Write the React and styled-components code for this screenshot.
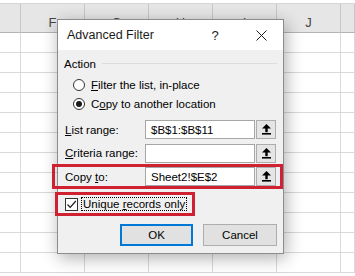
import React from "react";
import styled, { createGlobalStyle } from "styled-components";

const GlobalStyle = createGlobalStyle`
  html, body {
    margin: 0;
    padding: 0;
    background: #ffffff;
    overflow: hidden;
  }
  body {
    font-family: "Liberation Sans", Arial, sans-serif;
  }
`;

const Page = styled.div`
  position: relative;
  width: 355px;
  height: 276px;
  overflow: hidden;
  background: #ffffff;
`;

const TopStrip = styled.div`
  height: 3px;
  background: #ffffff;
  border-bottom: 1px solid #d6d6d6;
`;

const SheetRow = styled.div`
  display: grid;
  grid-template-columns: 21px repeat(5, 64px) 1fr;
  height: ${(p) => (p.header ? "29px" : "20px")};
  background: ${(p) => (p.header ? "#e6e6e6" : "#ffffff")};
`;

const Cell = styled.div`
  box-sizing: border-box;
  border-right: 1px solid ${(p) => (p.header ? "#c6c6c6" : "#d9d9d9")};
  border-bottom: 1px solid ${(p) => (p.header ? "#b4b4b4" : "#d9d9d9")};
  display: flex;
  align-items: flex-end;
  justify-content: center;
  padding-bottom: 2px;
  font-family: "Liberation Sans", Arial, sans-serif;
  font-size: 13px;
  line-height: 15px;
  color: #444444;
`;

const Dialog = styled.div`
  position: absolute;
  left: 57px;
  top: 19px;
  width: 227px;
  height: 235px;
  box-sizing: border-box;
  border: 1px solid #8c8c8c;
  background: #f0f0f0;
  box-shadow: 2px 4px 16px rgba(0, 0, 0, 0.32);
  display: flex;
  flex-direction: column;
  font-family: "Liberation Sans", Arial, sans-serif;
  font-size: 11.5px;
  color: #000000;
`;

const TitleBar = styled.div`
  height: 30px;
  background: #ffffff;
  display: flex;
  align-items: center;
`;

const Title = styled.div`
  flex: 1;
  padding-left: 9px;
  font-size: 12.5px;
  color: #1a1a1a;
`;

const TitleButton = styled.div`
  width: ${(p) => p.w}px;
  height: 30px;
  display: flex;
  align-items: center;
  justify-content: center;
  font-size: 13px;
  color: #1a1a1a;
`;

const Body = styled.div`
  display: flex;
  flex-direction: column;
`;

const GroupHeader = styled.div`
  margin-top: 4px;
  height: 20px;
  display: flex;
  align-items: center;
  padding-left: 6px;
  padding-right: 6px;
  gap: 6px;
  &::after {
    content: "";
    flex: 1;
    height: 1px;
    background: #dcdcdc;
    margin-top: -1px;
  }
`;

const RadioList = styled.div`
  margin-top: 1px;
  display: flex;
  flex-direction: column;
`;

const RadioRow = styled.label`
  height: 19px;
  display: flex;
  align-items: center;
  padding-left: 15px;
  gap: 6px;
`;

const RadioCircle = styled.span`
  width: 12px;
  height: 12px;
  box-sizing: border-box;
  border-radius: 50%;
  border: 1px solid #333333;
  background: #ffffff;
  display: flex;
  align-items: center;
  justify-content: center;
  &::after {
    content: "";
    width: 6px;
    height: 6px;
    border-radius: 50%;
    background: ${(p) => (p.checked ? "#1a1a1a" : "transparent")};
  }
`;

const Key = styled.span`
  text-decoration: underline;
  text-underline-offset: 1px;
`;

const Form = styled.div`
  margin-top: 7px;
  display: flex;
  flex-direction: column;
  gap: 4.5px;
`;

const FieldRow = styled.div`
  position: relative;
  height: 19px;
  display: flex;
  align-items: center;
  padding-left: 7px;
  ${(p) =>
    p.highlight &&
    `
    &::after {
      content: "";
      position: absolute;
      left: -6px;
      right: 0;
      top: -3px;
      bottom: -3px;
      border: 3px solid #cf2131;
      pointer-events: none;
    }
  `}
`;

const FieldLabel = styled.div`
  width: 80px;
`;

const Input = styled.div`
  width: 110px;
  height: 19px;
  box-sizing: border-box;
  border: 1px solid #a6a6a6;
  background: #ffffff;
  display: flex;
  align-items: center;
  padding-left: 5px;
  font-size: 11.5px;
`;

const PickButton = styled.div`
  margin-left: 1px;
  width: 20px;
  height: 19px;
  box-sizing: border-box;
  border: 1px solid #adadad;
  background: #e5e5e5;
  display: flex;
  align-items: center;
  justify-content: center;
`;

const CheckRow = styled.div`
  margin-top: 6px;
  margin-left: -3px;
  width: 140px;
  height: 24px;
  box-sizing: border-box;
  border: 3px solid #cf2131;
  display: flex;
  align-items: center;
  padding-left: 7px;
  gap: 3px;
`;

const CheckBox = styled.span`
  width: 13px;
  height: 13px;
  box-sizing: border-box;
  border: 1px solid #333333;
  background: #ffffff;
  display: flex;
  align-items: center;
  justify-content: center;
`;

const FocusLabel = styled.span`
  border: 1px dotted #000000;
  padding: 0 1px;
  line-height: 12px;
`;

const ButtonRow = styled.div`
  margin-top: 8px;
  display: flex;
  justify-content: flex-end;
  gap: 10px;
  padding-right: 6px;
`;

const Button = styled.div`
  width: ${(p) => (p.primary ? "73px" : "74px")};
  height: 22px;
  box-sizing: border-box;
  border: ${(p) => (p.primary ? "2px solid #0078d7" : "1px solid #adadad")};
  background: #e1e1e1;
  display: flex;
  align-items: center;
  justify-content: center;
  font-size: 11.5px;
`;

const UpArrow = () => (
  <svg width="9" height="11" viewBox="0 0 9 11">
    <polygon points="4.5,0 0,4.5 9,4.5" fill="#000" />
    <rect x="3.3" y="4" width="2.4" height="4.2" fill="#000" />
    <rect x="0" y="9" width="9" height="1.6" fill="#000" />
  </svg>
);

const CloseIcon = () => (
  <svg width="11" height="11" viewBox="0 0 11 11">
    <path d="M0.5 0.5 L10.5 10.5 M10.5 0.5 L0.5 10.5" stroke="#1a1a1a" strokeWidth="1" />
  </svg>
);

const CheckMark = () => (
  <svg width="11" height="11" viewBox="0 0 11 11">
    <path d="M1.5 5.5 L4.2 8.3 L9.8 2" stroke="#1a1a1a" strokeWidth="1.2" fill="none" />
  </svg>
);

const columns = ["E", "F", "G", "H", "I", "J", ""];

const App = () => {
  const rows = Array.from({ length: 12 });

  return (
    <Page>
      <GlobalStyle />
      <TopStrip />
      <SheetRow header>
        {columns.map((c, i) => (
          <Cell header key={i}>
            {i === 0 ? "" : c}
          </Cell>
        ))}
      </SheetRow>
      {rows.map((_, r) => (
        <SheetRow key={r}>
          {columns.map((c, i) => (
            <Cell key={i} />
          ))}
        </SheetRow>
      ))}

      <Dialog>
        <TitleBar>
          <Title>Advanced Filter</Title>
          <TitleButton w={48}>?</TitleButton>
          <TitleButton w={44}>
            <CloseIcon />
          </TitleButton>
        </TitleBar>
        <Body>
          <GroupHeader>Action</GroupHeader>
          <RadioList>
            <RadioRow>
              <RadioCircle />
              <span>
                <Key>F</Key>ilter the list, in-place
              </span>
            </RadioRow>
            <RadioRow>
              <RadioCircle checked />
              <span>
                C<Key>o</Key>py to another location
              </span>
            </RadioRow>
          </RadioList>

          <Form>
            <FieldRow>
              <FieldLabel>
                <Key>L</Key>ist range:
              </FieldLabel>
              <Input>$B$1:$B$11</Input>
              <PickButton>
                <UpArrow />
              </PickButton>
            </FieldRow>
            <FieldRow>
              <FieldLabel>
                <Key>C</Key>riteria range:
              </FieldLabel>
              <Input />
              <PickButton>
                <UpArrow />
              </PickButton>
            </FieldRow>
            <FieldRow highlight>
              <FieldLabel>
                Copy <Key>t</Key>o:
              </FieldLabel>
              <Input>Sheet2!$E$2</Input>
              <PickButton>
                <UpArrow />
              </PickButton>
            </FieldRow>
          </Form>

          <CheckRow>
            <CheckBox>
              <CheckMark />
            </CheckBox>
            <FocusLabel>
              Unique <Key>r</Key>ecords only
            </FocusLabel>
          </CheckRow>

          <ButtonRow>
            <Button primary>OK</Button>
            <Button>Cancel</Button>
          </ButtonRow>
        </Body>
      </Dialog>
    </Page>
  );
};

export default App;
